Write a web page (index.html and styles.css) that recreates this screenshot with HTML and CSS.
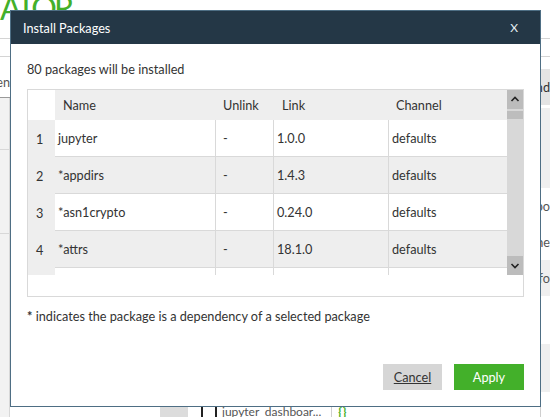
FILE: index.html
```html
<!DOCTYPE html>
<html>
<head>
<meta charset="utf-8">
<title>Install Packages</title>
<link rel="stylesheet" href="styles.css">
</head>
<body>
<div class="app">
  <header class="brand"><span class="logo">ATOR</span></header>
  <div class="tabs"></div>
  <div class="main">
    <aside class="side">
      <div class="side-item">Open</div>
      <div class="side-list">
        <div class="side-row"></div>
        <div class="side-row"></div>
      </div>
    </aside>
    <section class="center">
      <div class="center-fill"></div>
      <div class="bottom-row">
        <span class="chip"></span>
        <span class="bars"><i></i><i></i></span>
        <span class="pkg">jupyter_dashboar...</span>
        <span class="sep"></span>
        <span class="braces">{ }</span>
      </div>
    </section>
    <aside class="right">
      <div class="right-btn">Find</div>
      <div class="right-block"></div>
      <div class="right-row">po</div>
      <div class="right-row">ne</div>
      <div class="right-row gray">fo</div>
      <div class="right-row tall"></div>
      <div class="right-row gray tall"></div>
    </aside>
  </div>
</div>

<div class="dialog">
  <div class="dialog-header">
    <span class="dialog-title">Install Packages</span>
    <span class="dialog-close">X</span>
  </div>
  <div class="dialog-body">
    <p class="summary">80 packages will be installed</p>
    <div class="table-box">
      <div class="viewport">
        <div class="table">
          <div class="row head">
            <div class="c num"></div>
            <div class="c name">Name</div>
            <div class="c unlink">Unlink</div>
            <div class="c link">Link</div>
            <div class="c channel">Channel</div>
          </div>
          <div class="row odd">
            <div class="c num">1</div>
            <div class="c name">jupyter</div>
            <div class="c unlink">-</div>
            <div class="c link">1.0.0</div>
            <div class="c channel">defaults</div>
          </div>
          <div class="row even">
            <div class="c num">2</div>
            <div class="c name">*appdirs</div>
            <div class="c unlink">-</div>
            <div class="c link">1.4.3</div>
            <div class="c channel">defaults</div>
          </div>
          <div class="row odd">
            <div class="c num">3</div>
            <div class="c name">*asn1crypto</div>
            <div class="c unlink">-</div>
            <div class="c link">0.24.0</div>
            <div class="c channel">defaults</div>
          </div>
          <div class="row even">
            <div class="c num">4</div>
            <div class="c name">*attrs</div>
            <div class="c unlink">-</div>
            <div class="c link">18.1.0</div>
            <div class="c channel">defaults</div>
          </div>
          <div class="row odd">
            <div class="c num">5</div>
            <div class="c name">*automat</div>
            <div class="c unlink">-</div>
            <div class="c link">0.7.0</div>
            <div class="c channel">defaults</div>
          </div>
        </div>
        <div class="scrollbar">
          <div class="sb-btn"><svg width="16" height="19" viewBox="0 0 16 19"><polyline points="4.5,11 8,7.5 11.5,11" fill="none" stroke="#222" stroke-width="1.6"/></svg></div>
          <div class="sb-gap"></div>
          <div class="sb-thumb"></div>
          <div class="sb-track"></div>
          <div class="sb-btn"><svg width="16" height="19" viewBox="0 0 16 19"><polyline points="4.5,8 8,11.5 11.5,8" fill="none" stroke="#222" stroke-width="1.6"/></svg></div>
        </div>
      </div>
    </div>
    <p class="note"><b>*</b> indicates the package is a dependency of a selected package</p>
    <div class="actions">
      <button class="btn cancel">Cancel</button>
      <button class="btn apply">Apply</button>
    </div>
  </div>
</div>
</body>
</html>
```

FILE: styles.css
```css
* { box-sizing: border-box; }
html, body { margin: 0; padding: 0; }
body {
  width: 550px;
  height: 417px;
  overflow: hidden;
  background: #ffffff;
  font-family: "Lato", "Open Sans", sans-serif;
  font-size: 12.7px;
  color: #333333;
  position: relative;
}

/* ---------- background app ---------- */
.app {
  height: 417px;
  display: flex;
  flex-direction: column;
}
.brand {
  height: 39px;
  border-bottom: 1px solid #d4d4d4;
  overflow: hidden;
}
.logo {
  display: block;
  margin-top: -8px;
  font-size: 32px;
  font-weight: 400;
  color: #43b02a;
  line-height: 32px;
  letter-spacing: -3px;
  white-space: nowrap;
}
.tabs {
  height: 18px;
  border-bottom: 1px solid #d4d4d4;
}
.main {
  flex: 1;
  display: grid;
  grid-template-columns: 10px 1fr 10px;
  min-height: 0;
}
.side {
  overflow: hidden;
  display: flex;
  flex-direction: column;
}
.side-item {
  height: 41px;
  display: flex;
  align-items: center;
  justify-content: flex-end;
  white-space: nowrap;
  color: #555;
  border-bottom: 1px solid #9a9a9a;
  padding-top: 10px;
}
.side-list {
  flex: 1;
  background: #f2f2f2;
  border-right: 1px solid #d8d8d8;
}
.side-row {
  height: 84px;
  border-bottom: 1px solid #d8d8d8;
}
.side-row:first-child { height: 52px; }

.center {
  display: flex;
  flex-direction: column;
}
.center-fill { flex: 1; }
.bottom-row {
  height: 12px;
  display: flex;
  align-items: flex-start;
  padding-left: 150px;
  font-size: 12px;
  line-height: 14px;
  color: #555;
  overflow: hidden;
}
.chip {
  width: 28px;
  height: 12px;
  background: #dcdcdc;
}
.bars {
  display: flex;
  gap: 12px;
  margin-left: 13px;
}
.bars i {
  display: block;
  width: 2px;
  height: 12px;
  background: #222;
}
.pkg { margin-left: 5px; }
.sep {
  width: 1px;
  height: 12px;
  background: #cfcfcf;
  margin-left: 10px;
}
.braces {
  margin-left: 6px;
  color: #43b02a;
  font-weight: 700;
  letter-spacing: -1px;
}

.right {
  overflow: hidden;
  display: flex;
  flex-direction: column;
  border-left: 1px solid #cfcfcf;
}
.right-btn {
  margin-top: 12px;
  height: 36px;
  background: #e4e4e4;
  display: flex;
  align-items: center;
  justify-content: flex-end;
  white-space: nowrap;
  color: #333;
}
.right-block {
  margin-top: 3px;
  height: 80px;
  background: #efefef;
}
.right-row {
  height: 36px;
  display: flex;
  align-items: center;
  justify-content: flex-end;
  color: #555;
  white-space: nowrap;
}
.right-row.gray { background: #efefef; }
.right-row.tall { height: 48px; }

/* ---------- dialog ---------- */
.dialog {
  position: absolute;
  left: 10px;
  top: 10px;
  width: 531px;
  height: 397px;
  background: #ffffff;
  border: 1px solid #4e6e84;
  display: flex;
  flex-direction: column;
}
.dialog-header {
  height: 33px;
  flex: none;
  background: #243746;
  color: #ffffff;
  display: flex;
  align-items: center;
  justify-content: space-between;
  padding: 0 22px 0 12px;
  font-size: 12.7px;
}
.dialog-close { font-size: 12px; color: #e6eef3; }
.dialog-body {
  flex: 1;
  display: flex;
  flex-direction: column;
  padding: 0 16px;
}
.summary {
  margin: 17px 0 0;
  line-height: 17px;
  color: #333;
}
.table-box {
  margin-top: 11px;
  height: 208px;
  border: 1px solid #d9d9d9;
}
.viewport {
  height: 185px;
  display: flex;
  overflow: hidden;
}
.table {
  flex: 1;
  overflow: hidden;
}
.row {
  display: grid;
  grid-template-columns: 27px 161px 58px 115px 1fr;
  height: 37px;
}
.row.head { height: 30px; }
.c {
  display: flex;
  align-items: center;
  white-space: nowrap;
  overflow: hidden;
  padding-left: 3px;
  border-bottom: 1px solid #d9d9d9;
}
.row.head .c { border-bottom: none; background: #eeeeee; padding-left: 8px; }
.row.head .c.num { background: #ffffff; }
.row.head .c.unlink, .row.head .c.channel { padding-left: 7px; }
.c.num {
  background: #eeeeee;
  border-bottom: none;
  padding-left: 8px;
}
.row:not(.head) .c.name,
.row:not(.head) .c.unlink,
.row:not(.head) .c.link { border-right: 1px solid #d9d9d9; }
.row:not(.head) .c.unlink { padding-left: 7px; }
.row.odd .c:not(.num) { background: #ffffff; }
.row.even .c:not(.num) { background: #eeeeee; }

.scrollbar {
  width: 16px;
  flex: none;
  display: flex;
  flex-direction: column;
  background: #d8d8d8;
}
.sb-btn {
  height: 19px;
  background: #bcbcbc;
  display: flex;
}
.sb-gap { height: 2px; background: #d8d8d8; }
.sb-thumb { height: 8px; background: #bdbdbd; }
.sb-track { flex: 1; }

.note {
  margin: 11px 0 0;
  line-height: 17px;
  color: #333;
}
.note b { font-weight: 700; }
.actions {
  margin-top: auto;
  margin-bottom: 16px;
  display: flex;
  justify-content: flex-end;
  gap: 12px;
}
.btn {
  height: 26px;
  border: none;
  font-family: inherit;
  font-size: 12.7px;
  padding: 0;
}
.cancel {
  width: 59px;
  background: #d6d6d6;
  color: #333;
  text-decoration: underline;
}
.apply {
  width: 70px;
  background: #43b02a;
  color: #ffffff;
}
```
